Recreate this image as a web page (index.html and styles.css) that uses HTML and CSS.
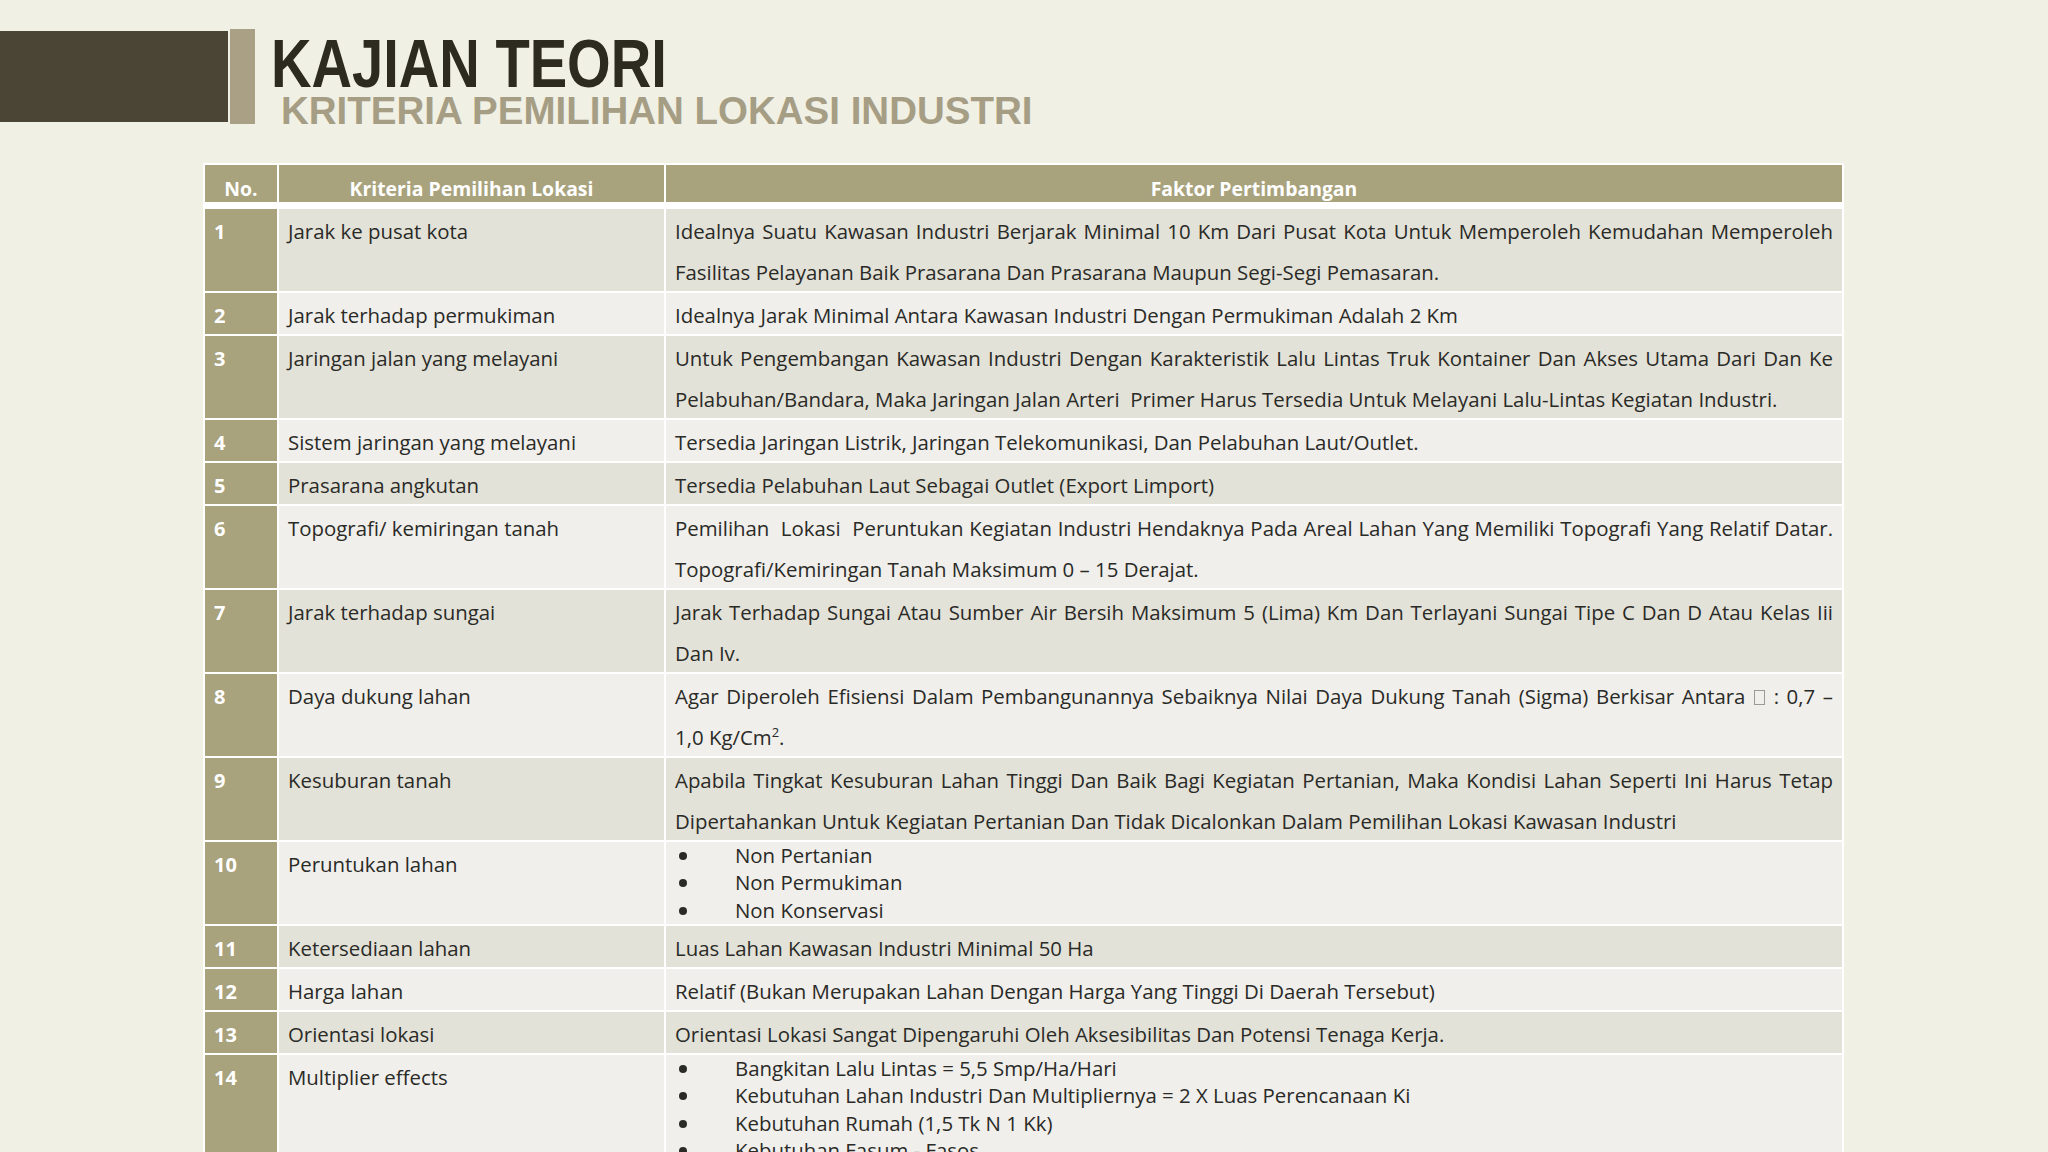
FILE: index.html
```html
<!DOCTYPE html>
<html lang="id">
<head>
<meta charset="utf-8">
<title>Kajian Teori</title>
<link rel="stylesheet" href="styles.css">
</head>
<body>
<header class="head">
  <div class="block-dark"></div>
  <div class="block-tan"></div>
  <div class="titles">
    <h1 class="title">KAJIAN TEORI</h1>
    <h2 class="subtitle">KRITERIA PEMILIHAN LOKASI INDUSTRI</h2>
  </div>
</header>

<div class="table">
  <div class="row thead">
    <div class="c c1">No.</div>
    <div class="c c2">Kriteria Pemilihan Lokasi</div>
    <div class="c c3">Faktor Pertimbangan</div>
  </div>

  <div class="row dark two">
    <div class="c c1">1</div>
    <div class="c c2">Jarak ke pusat kota</div>
    <div class="c c3">
      <div class="j">Idealnya Suatu Kawasan Industri Berjarak Minimal 10 Km Dari Pusat Kota Untuk Memperoleh Kemudahan Memperoleh</div>
      <div>Fasilitas Pelayanan Baik Prasarana Dan Prasarana Maupun Segi-Segi Pemasaran.</div>
    </div>
  </div>

  <div class="row light">
    <div class="c c1">2</div>
    <div class="c c2">Jarak terhadap permukiman</div>
    <div class="c c3">Idealnya Jarak Minimal Antara Kawasan Industri Dengan Permukiman Adalah 2 Km</div>
  </div>

  <div class="row dark two">
    <div class="c c1">3</div>
    <div class="c c2">Jaringan jalan yang melayani</div>
    <div class="c c3">
      <div class="j">Untuk Pengembangan Kawasan Industri Dengan Karakteristik Lalu Lintas Truk Kontainer Dan Akses Utama Dari Dan Ke</div>
      <div>Pelabuhan/Bandara, Maka Jaringan Jalan Arteri&nbsp; Primer Harus Tersedia Untuk Melayani Lalu-Lintas Kegiatan Industri.</div>
    </div>
  </div>

  <div class="row light">
    <div class="c c1">4</div>
    <div class="c c2">Sistem jaringan yang melayani</div>
    <div class="c c3">Tersedia Jaringan Listrik, Jaringan Telekomunikasi, Dan Pelabuhan Laut/Outlet.</div>
  </div>

  <div class="row dark">
    <div class="c c1">5</div>
    <div class="c c2">Prasarana angkutan</div>
    <div class="c c3">Tersedia Pelabuhan Laut Sebagai Outlet (Export Limport)</div>
  </div>

  <div class="row light two">
    <div class="c c1">6</div>
    <div class="c c2">Topografi/ kemiringan tanah</div>
    <div class="c c3">
      <div class="j">Pemilihan&nbsp; Lokasi&nbsp; Peruntukan Kegiatan Industri Hendaknya Pada Areal Lahan Yang Memiliki Topografi Yang Relatif Datar.</div>
      <div>Topografi/Kemiringan Tanah Maksimum 0 – 15 Derajat.</div>
    </div>
  </div>

  <div class="row dark two">
    <div class="c c1">7</div>
    <div class="c c2">Jarak terhadap sungai</div>
    <div class="c c3">
      <div class="j">Jarak Terhadap Sungai Atau Sumber Air Bersih Maksimum 5 (Lima) Km Dan Terlayani Sungai Tipe C Dan D Atau Kelas Iii</div>
      <div>Dan Iv.</div>
    </div>
  </div>

  <div class="row light two">
    <div class="c c1">8</div>
    <div class="c c2">Daya dukung lahan</div>
    <div class="c c3">
      <div class="j">Agar Diperoleh Efisiensi Dalam Pembangunannya Sebaiknya Nilai Daya Dukung Tanah (Sigma) Berkisar Antara <span class="tofu"></span> : 0,7 –</div>
      <div>1,0 Kg/Cm<sup class="sup">2</sup>.</div>
    </div>
  </div>

  <div class="row dark two">
    <div class="c c1">9</div>
    <div class="c c2">Kesuburan tanah</div>
    <div class="c c3">
      <div class="j">Apabila Tingkat Kesuburan Lahan Tinggi Dan Baik Bagi Kegiatan Pertanian, Maka Kondisi Lahan Seperti Ini Harus Tetap</div>
      <div>Dipertahankan Untuk Kegiatan Pertanian Dan Tidak Dicalonkan Dalam Pemilihan Lokasi Kawasan Industri</div>
    </div>
  </div>

  <div class="row light two">
    <div class="c c1">10</div>
    <div class="c c2">Peruntukan lahan</div>
    <div class="c c3 list">
      <div class="li"><span class="dot"></span>Non Pertanian</div>
      <div class="li"><span class="dot"></span>Non Permukiman</div>
      <div class="li"><span class="dot"></span>Non Konservasi</div>
    </div>
  </div>

  <div class="row dark">
    <div class="c c1">11</div>
    <div class="c c2">Ketersediaan lahan</div>
    <div class="c c3">Luas Lahan Kawasan Industri Minimal 50 Ha</div>
  </div>

  <div class="row light">
    <div class="c c1">12</div>
    <div class="c c2">Harga lahan</div>
    <div class="c c3">Relatif (Bukan Merupakan Lahan Dengan Harga Yang Tinggi Di Daerah Tersebut)</div>
  </div>

  <div class="row dark">
    <div class="c c1">13</div>
    <div class="c c2">Orientasi lokasi</div>
    <div class="c c3">Orientasi Lokasi Sangat Dipengaruhi Oleh Aksesibilitas Dan Potensi Tenaga Kerja.</div>
  </div>

  <div class="row light tall">
    <div class="c c1">14</div>
    <div class="c c2">Multiplier effects</div>
    <div class="c c3 list">
      <div class="li"><span class="dot"></span>Bangkitan Lalu Lintas = 5,5 Smp/Ha/Hari</div>
      <div class="li"><span class="dot"></span>Kebutuhan Lahan Industri Dan Multipliernya = 2 X Luas Perencanaan Ki</div>
      <div class="li"><span class="dot"></span>Kebutuhan Rumah (1,5 Tk N 1 Kk)</div>
      <div class="li"><span class="dot"></span>Kebutuhan Fasum - Fasos</div>
    </div>
  </div>
</div>
</body>
</html>
```

FILE: styles.css
```css
html, body {
  margin: 0;
  padding: 0;
}

body {
  width: 2048px;
  height: 1152px;
  overflow: hidden;
  background: #f1f0e5;
  font-family: "Open Sans", "Noto Sans", sans-serif;
}

/* ---------- header ---------- */
.head {
  display: flex;
  align-items: flex-start;
  height: 163px;
  padding-top: 29px;
  box-sizing: border-box;
}

.block-dark {
  width: 228px;
  height: 91px;
  margin-top: 2px;
  background: #4a4535;
}

.block-tan {
  width: 25px;
  height: 95px;
  margin-left: 2px;
  background: #a9a086;
}

.titles {
  margin-left: 16px;
  margin-top: 4px;
}

.title {
  margin: 0;
  font-family: "Liberation Sans", Arial, sans-serif;
  font-weight: 700;
  font-size: 68px;
  line-height: 61px;
  color: #2d2a1f;
  white-space: nowrap;
  transform: scaleX(0.825);
  transform-origin: left top;
}

.subtitle {
  margin: 1px 0 0 10px;
  font-family: "Liberation Sans", Arial, sans-serif;
  font-weight: 700;
  font-size: 38.5px;
  line-height: 31px;
  color: #a69e84;
  white-space: nowrap;
}

/* ---------- table ---------- */
.table {
  margin-left: 203px;
  width: 1641px;
  box-sizing: border-box;
  padding: 2px;
  background: #ffffff;
  display: flex;
  flex-direction: column;
  gap: 2px;
}

.row {
  display: grid;
  grid-template-columns: 72px 385px 1176px;
  grid-template-rows: minmax(0, 1fr);
  gap: 2px;
  height: 41px;
}

.row.two {
  height: 82px;
}

.row.tall {
  height: 140px;
}

.c {
  box-sizing: border-box;
  padding: 2px 9px 0;
  font-size: 20.4px;
  line-height: 41px;
  color: #2a2a27;
  white-space: nowrap;
}

.c1 {
  background: #a8a27d;
  color: #ffffff;
  font-weight: 700;
  font-size: 20px;
}

.dark .c2, .dark .c3 {
  background: #e3e2d8;
}

.light .c2, .light .c3 {
  background: #f0efeb;
}

.thead {
  height: 37px;
  margin-bottom: 5px;
}

.thead .c {
  background: #a8a27d;
  color: #ffffff;
  font-weight: 700;
  font-size: 19.4px;
  text-align: center;
  line-height: 37px;
  padding-top: 5px;
}

.j {
  text-align: justify;
  text-align-last: justify;
  white-space: normal;
}

.tofu {
  display: inline-block;
  width: 9px;
  height: 13px;
  border: 1px solid #9a9a96;
  vertical-align: -1px;
  margin: 0 1px;
}

.sup {
  font-size: 13px;
  line-height: 0;
  vertical-align: 8px;
}

.list {
  padding-top: 0;
  line-height: 27.4px;
}

.li {
  display: flex;
  align-items: center;
}

.dot {
  width: 8px;
  height: 8px;
  border-radius: 50%;
  background: #2a2a27;
  margin: 0 48px 0 4px;
  flex: none;
}
```
